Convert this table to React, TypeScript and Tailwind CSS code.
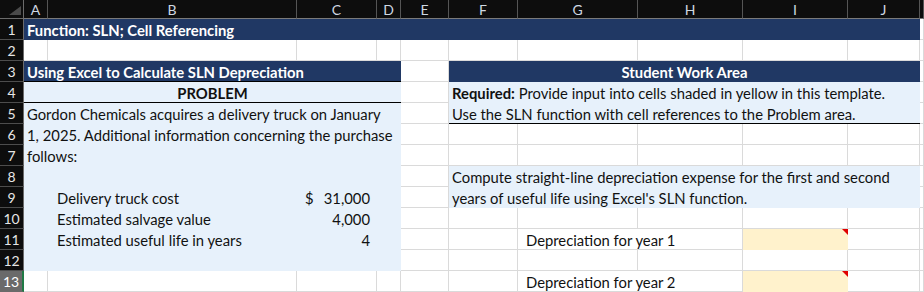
import React from "react";

const line = "border-r border-b border-[#dadada]";
const dark = "bg-[#203864] text-white font-bold";
const light = "bg-[#e7f1fb]";
const txt = "min-h-0 overflow-visible leading-[20px] pt-px px-[3px] whitespace-nowrap";

const letters = ["A", "B", "C", "D", "E", "F", "G", "H", "I", "J", ""];

function Empty({ className = "" }: { className?: string }) {
  return <div className={`min-h-0 ${line} ${className}`} />;
}

function RowNum({ n, active = false }: { n: number; active?: boolean }) {
  return (
    <div
      className={`flex items-center justify-center border-b text-[14px] leading-none pt-px ${
        active
          ? "bg-[#6a6a6a] border-b-[#6a6a6a] border-r-2 border-r-[#1f7a45] text-white"
          : "bg-[#0d0d0d] border-b-[#4d4d4d] border-r border-r-[#6b6b6b] text-[#e6e6e6]"
      }`}
    >
      {n}
    </div>
  );
}

// input cell, shaded yellow, with the comment marker in the corner
function InputCell() {
  return (
    <div className="relative bg-[#fff2cc]">
      <div className="absolute right-0 top-0 w-0 h-0 border-l-[6px] border-l-transparent border-t-[6px] border-t-[#e00000]" />
    </div>
  );
}

function Fact({ label, value, dollar = false }: { label: string; value: string; dollar?: boolean }) {
  return (
    <>
      <div className={light} />
      <div className={`${light} ${txt} pl-[9px]`}>{label}</div>
      <div className={`${light} ${txt} flex justify-between pl-[8px] pr-[7px]`}>
        <span>{dollar ? "$" : ""}</span>
        <span>{value}</span>
      </div>
      <div className={light} />
    </>
  );
}

export default function App() {
  return (
    <div
      className="w-[924px] h-[292px] overflow-hidden bg-white text-[#111] text-[14.8px]"
      style={{ fontFamily: "Lato, 'Open Sans', sans-serif" }}
    >
      <div className="grid grid-cols-[24px_24px_249px_80px_24px_48px_69px_120px_105px_105px_72px_4px] grid-rows-[19px_repeat(13,21px)]">
        {/* column headers */}
        <div className="relative bg-[#0d0d0d] border-r border-b border-[#6b6b6b]">
          <div className="absolute right-[2px] bottom-[3px] w-0 h-0 border-l-[12px] border-l-transparent border-b-[9px] border-b-[#4a4a4a]" />
        </div>
        {letters.map((l, i) => (
          <div
            key={i}
            className="flex items-center justify-center bg-[#0d0d0d] border-r border-r-[#555] border-b border-b-[#7a7a7a] text-[14px] leading-none pt-px text-[#cfd8e2]"
          >
            {l}
          </div>
        ))}

        {/* 1 */}
        <RowNum n={1} />
        <div className={`col-span-10 ${dark} ${txt}`}>Function: SLN; Cell Referencing</div>
        <Empty />

        {/* 2 */}
        <RowNum n={2} />
        <Empty />
        <Empty />
        <Empty />
        <Empty />
        <Empty />
        <Empty />
        <Empty />
        <Empty />
        <Empty />
        <Empty />
        <Empty />

        {/* 3 */}
        <RowNum n={3} />
        <div className={`col-span-4 ${dark} ${txt} border-b border-b-black leading-[19px]`}>
          Using Excel to Calculate SLN Depreciation
        </div>
        <Empty />
        <div className={`col-span-5 ${dark} ${txt} text-center`}>Student Work Area</div>
        <Empty />

        {/* 4 */}
        <RowNum n={4} />
        <div className={`col-span-4 ${light} ${txt} text-center font-bold border-b border-b-black leading-[19px]`}>
          PROBLEM
        </div>
        <Empty />
        <div className={`col-span-5 ${light} ${txt}`}>
          <span className="font-bold">Required:</span> Provide input into cells shaded in yellow in this template.
        </div>
        <Empty />

        {/* 5 */}
        <RowNum n={5} />
        <div className={`col-span-4 ${light} ${txt}`}>Gordon Chemicals acquires a delivery truck on January</div>
        <Empty />
        <div className={`col-span-5 ${light} ${txt} border-b border-b-black leading-[19px]`}>
          Use the SLN function with cell references to the Problem area.
        </div>
        <Empty />

        {/* 6 */}
        <RowNum n={6} />
        <div className={`col-span-4 ${light} ${txt}`}>1, 2025. Additional information concerning the purchase</div>
        <Empty />
        <Empty />
        <Empty />
        <Empty />
        <Empty />
        <Empty />
        <Empty />

        {/* 7 */}
        <RowNum n={7} />
        <div className={`col-span-4 ${light} ${txt}`}>follows:</div>
        <Empty />
        <Empty />
        <Empty />
        <Empty />
        <Empty />
        <Empty />
        <Empty />

        {/* 8 */}
        <RowNum n={8} />
        <div className={`col-span-4 ${light}`} />
        <Empty />
        <div className={`col-span-5 ${light} ${txt}`}>
          Compute straight-line depreciation expense for the first and second
        </div>
        <Empty />

        {/* 9 */}
        <RowNum n={9} />
        <Fact label="Delivery truck cost" value="31,000" dollar />
        <Empty />
        <div className={`col-span-5 ${light} ${txt}`}>years of useful life using Excel's SLN function.</div>
        <Empty />

        {/* 10 */}
        <RowNum n={10} />
        <Fact label="Estimated salvage value" value="4,000" />
        <Empty />
        <Empty />
        <Empty />
        <Empty />
        <Empty />
        <Empty />
        <Empty />

        {/* 11 */}
        <RowNum n={11} />
        <Fact label="Estimated useful life in years" value="4" />
        <Empty />
        <Empty />
        <div className={`col-span-2 ${line} ${txt} leading-[19px] pl-[8px]`}>Depreciation for year 1</div>
        <InputCell />
        <Empty />
        <Empty />

        {/* 12 */}
        <RowNum n={12} />
        <div className={`col-span-4 ${light}`} />
        <Empty />
        <Empty />
        <Empty />
        <Empty />
        <Empty />
        <Empty />
        <Empty />

        {/* 13 */}
        <RowNum n={13} active />
        <Empty />
        <Empty />
        <Empty />
        <Empty />
        <Empty />
        <Empty />
        <div className={`col-span-2 ${line} ${txt} leading-[19px] pl-[8px]`}>Depreciation for year 2</div>
        <InputCell />
        <Empty />
        <Empty />
      </div>
    </div>
  );
}
